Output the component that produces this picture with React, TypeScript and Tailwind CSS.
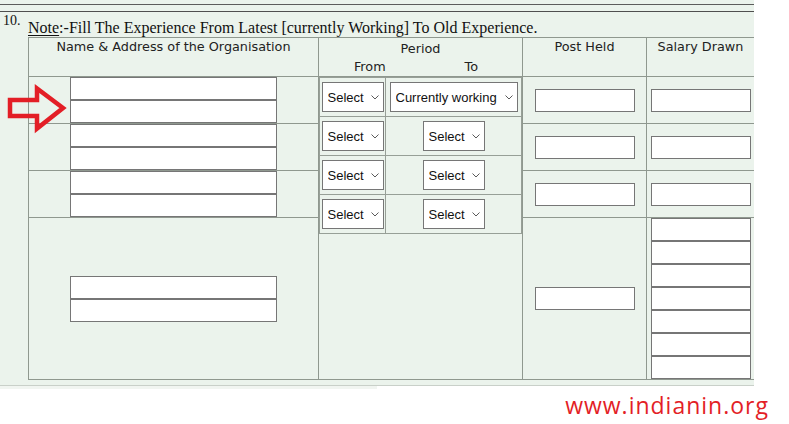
import React from "react";

const sans = "font-['DejaVu_Sans',sans-serif]";

function TextBox({ className = "w-[207px]" }: { className?: string }) {
  return (
    <input
      type="text"
      className={`block h-[23px] border border-[#767676] bg-white ${className}`}
    />
  );
}

function Dropdown({ label = "Select", className = "w-[62px]" }: { label?: string; className?: string }) {
  return (
    <div className={`relative h-[30px] ${className}`}>
      <select className="h-full w-full appearance-none rounded-none border border-[#767676] bg-white pl-[5px] pt-px font-['Liberation_Sans',sans-serif] text-[13px] text-[#111]">
        <option>{label}</option>
      </select>
      <svg
        className="pointer-events-none absolute right-[5px] top-[13px]"
        width="8"
        height="5"
        viewBox="0 0 8 5"
      >
        <path d="M0.5 0.5L4 4L7.5 0.5" fill="none" stroke="#5a5a5a" strokeWidth="1" />
      </svg>
    </div>
  );
}

const periodRows = [
  { to: "Currently working", toWidth: "w-[128px]" },
  { to: "Select", toWidth: "w-[62px]" },
  { to: "Select", toWidth: "w-[62px]" },
  { to: "Select", toWidth: "w-[62px]" },
];

export default function App() {
  return (
    <div className="relative h-[424px] w-[789px] overflow-hidden bg-white">
      <div className="h-[385px] w-[754px] bg-[#ebf3ec]">
        <div className="h-[4px]" />
        <div className="h-px bg-[#5c5c5c]" />
        <div className="h-[6px]" />
        <div className="h-px bg-[#4f4f4f]" />
        <div className="flex">
          <div className="w-[28px] pl-[3px] pt-[1px] font-['Liberation_Serif',serif] text-[14px] leading-[15px] text-[#111]">
            10.
          </div>
          <div>
            <p className="pt-[7px] font-['Liberation_Serif',serif] text-[16px] leading-[18px] text-[#111]">
              <span className="underline underline-offset-[2px]">Note</span>:-Fill The Experience From
              Latest [currently Working] To Old Experience.
            </p>

            <div
              className={`grid grid-cols-[290px_204px_124px_107px] grid-rows-[39px_47px_47px_47px_162px] border-l border-t border-[#8f988f] ${sans} text-[12.8px] text-[#222]`}
            >
              {/* header */}
              <div className="border-b border-r border-[#8f988f] pt-px text-center leading-[16px]">
                Name &amp; Address of the Organisation
              </div>
              <div className="border-b border-r border-[#8f988f] pt-[2px] text-center">
                <div className="leading-[18px]">Period</div>
                <div className="grid grid-cols-2 leading-[18px]">
                  <span>From</span>
                  <span>To</span>
                </div>
              </div>
              <div className="border-b border-r border-[#8f988f] pt-px text-center leading-[16px]">
                Post Held
              </div>
              <div className="border-b border-[#8f988f] pt-px text-center leading-[16px]">
                Salary Drawn
              </div>

              {/* row 1 */}
              <div className="flex flex-col items-center justify-center border-b border-r border-[#8f988f]">
                <TextBox />
                <TextBox />
              </div>
              <div className="row-span-4 border-b border-r border-[#8f988f]">
                <div className="border-x border-t border-[#979f97]">
                  {periodRows.map((r, i) => (
                    <div
                      key={i}
                      className="grid h-[39px] grid-cols-[66px_1fr] border-b border-[#979f97]"
                    >
                      <div className="flex items-center justify-center border-r border-[#979f97]">
                        <Dropdown />
                      </div>
                      <div className="flex items-center justify-center">
                        <Dropdown label={r.to} className={r.toWidth} />
                      </div>
                    </div>
                  ))}
                </div>
              </div>
              <div className="flex items-center justify-center border-b border-r border-[#8f988f]">
                <TextBox className="w-[100px]" />
              </div>
              <div className="flex items-center justify-center border-b border-[#8f988f]">
                <TextBox className="w-[100px]" />
              </div>

              {/* row 2 */}
              <div className="flex flex-col items-center justify-center border-b border-r border-[#8f988f]">
                <TextBox />
                <TextBox />
              </div>
              <div className="flex items-center justify-center border-b border-r border-[#8f988f]">
                <TextBox className="w-[100px]" />
              </div>
              <div className="flex items-center justify-center border-b border-[#8f988f]">
                <TextBox className="w-[100px]" />
              </div>

              {/* row 3 */}
              <div className="flex flex-col items-center justify-center border-b border-r border-[#8f988f]">
                <TextBox />
                <TextBox />
              </div>
              <div className="flex items-center justify-center border-b border-r border-[#8f988f]">
                <TextBox className="w-[100px]" />
              </div>
              <div className="flex items-center justify-center border-b border-[#8f988f]">
                <TextBox className="w-[100px]" />
              </div>

              {/* row 4 */}
              <div className="flex flex-col items-center justify-center border-b border-r border-[#8f988f]">
                <TextBox />
                <TextBox />
              </div>
              <div className="flex items-center justify-center border-b border-r border-[#8f988f]">
                <TextBox className="w-[100px]" />
              </div>
              <div className="flex flex-col items-center justify-center border-b border-[#8f988f]">
                {Array.from({ length: 7 }).map((_, i) => (
                  <TextBox key={i} className="w-[100px]" />
                ))}
              </div>
            </div>
          </div>
        </div>
      </div>
      <div className="h-px w-[754px] bg-[#c9d0c9]" />
      <div className="h-[3px] w-[377px] bg-[#f1f5f1]" />

      <div className="mt-[3px] flex justify-end pr-[20px]">
        <span className="font-['Open_Sans',sans-serif] text-[23px] leading-[26px] tracking-[1px] text-[#e31e26]">
          www.indianin.org
        </span>
      </div>

      {/* red arrow pointing to the first row */}
      <svg
        className="pointer-events-none absolute left-0 top-[80px]"
        width="72"
        height="56"
        viewBox="0 0 72 56"
      >
        <polygon
          points="10,20 37,20 37,8.5 63,28 37,48.5 37,36 10,36"
          fill="none"
          stroke="#e31e26"
          strokeWidth="4.5"
          strokeLinejoin="miter"
        />
      </svg>
    </div>
  );
}
